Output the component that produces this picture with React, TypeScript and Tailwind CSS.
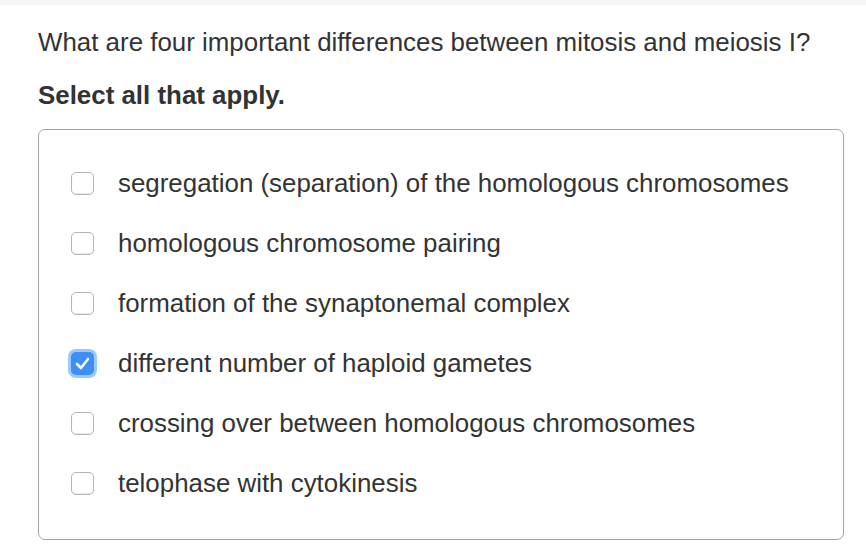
import React from "react";

const options = [
  { label: "segregation (separation) of the homologous chromosomes", checked: false },
  { label: "homologous chromosome pairing", checked: false },
  { label: "formation of the synaptonemal complex", checked: false },
  { label: "different number of haploid gametes", checked: true },
  { label: "crossing over between homologous chromosomes", checked: false },
  { label: "telophase with cytokinesis", checked: false },
];

function Box({ checked }: { checked: boolean }) {
  if (checked) {
    return (
      <div className="w-[29px] h-[29px] rounded-[8px] bg-[#9cc8fb] flex items-center justify-center shrink-0 -ml-[3px] mr-[-3px]">
        <div className="w-[23px] h-[23px] rounded-[5px] bg-[#3d8ff5] flex items-center justify-center">
          <svg width="15" height="13" viewBox="0 0 15 13">
            <path d="M2 7 L6 11 L13 2" fill="none" stroke="white" strokeWidth="2.6" strokeLinecap="round" strokeLinejoin="round" />
          </svg>
        </div>
      </div>
    );
  }
  return <div className="w-[23px] h-[23px] rounded-[5px] border border-[#b5b5b5] bg-white shadow-[inset_0_-1px_1px_rgba(0,0,0,0.08)] shrink-0" />;
}

export default function App() {
  return (
    <div className="w-[866px] h-[552px] bg-white text-[#333] overflow-hidden" style={{ fontFamily: '"Liberation Sans", Arial, sans-serif' }}>
      <div className="h-[5px] bg-[#f6f6f6]" />
      <div className="pl-[38px] pr-[22px]">
        <p className="text-[25.9px] leading-[28px] mt-[23px] whitespace-nowrap">What are four important differences between mitosis and meiosis I?</p>
        <p className="text-[25.9px] leading-[28px] font-bold mt-[25px]">Select all that apply.</p>
        <div className="mt-[20px] border-[1.5px] border-[#a3a3a3] rounded-[7px] h-[411px] pt-[23px] pl-[32px] flex flex-col">
          {options.map((o) => (
            <div key={o.label} className="flex items-center h-[60px]">
              <Box checked={o.checked} />
              <span className="ml-[24px] text-[25.9px] leading-[28px] whitespace-nowrap">{o.label}</span>
            </div>
          ))}
        </div>
      </div>
    </div>
  );
}
